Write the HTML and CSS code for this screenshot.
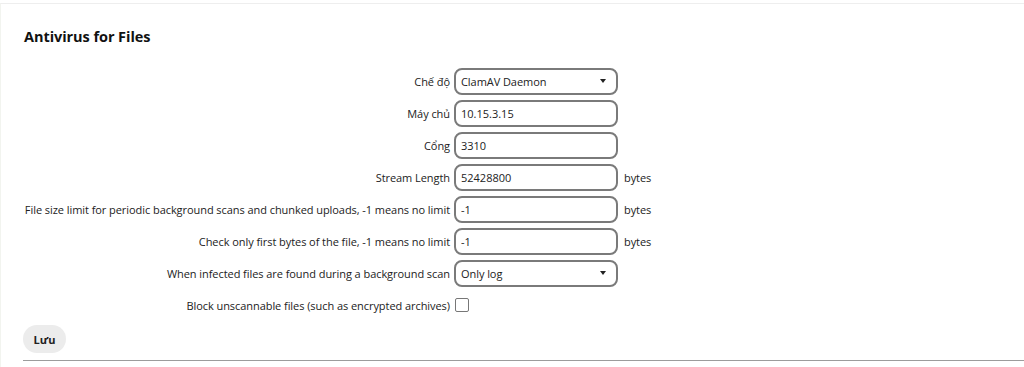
FILE: index.html
```html
<!DOCTYPE html>
<html lang="vi">
<head>
    <meta charset="UTF-8">
    <title>Antivirus for Files</title>
    <link rel="stylesheet" href="styles.css">
</head>
<body>
    <div class="page">
        <div class="section">
            <h2>Antivirus for Files</h2>

            <div class="form">
                <label>Chế độ</label>
                <div class="select">ClamAV Daemon <span class="caret"></span></div>
                <span></span>

                <label>Máy chủ</label>
                <input type="text" value="10.15.3.15">
                <span></span>

                <label>Cổng</label>
                <input type="text" value="3310">
                <span></span>

                <label>Stream Length</label>
                <input type="text" value="52428800">
                <span class="unit">bytes</span>

                <label>File size limit for periodic background scans and chunked uploads, -1 means no limit</label>
                <input type="text" value="-1">
                <span class="unit">bytes</span>

                <label>Check only first bytes of the file, -1 means no limit</label>
                <input type="text" value="-1">
                <span class="unit">bytes</span>

                <label>When infected files are found during a background scan</label>
                <div class="select">Only log <span class="caret"></span></div>
                <span></span>

                <label>Block unscannable files (such as encrypted archives)</label>
                <div class="check-cell"><span class="checkbox"></span></div>
                <span></span>
            </div>

            <button class="btn-save">Lưu</button>
        </div>
    </div>
</body>
</html>
```

FILE: styles.css
```css
* {
    margin: 0;
    padding: 0;
    box-sizing: border-box;
}

body {
    font-family: "Open Sans", "Noto Sans", sans-serif;
    font-size: 11px;
    letter-spacing: -0.06px;
    color: #222;
    background: #fff;
}

.page {
    margin-top: 3px;
    border-top: 1px solid #eeeeee;
    border-left: 1px solid #f2f4ef;
    height: 364px;
}

.section {
    margin-left: 22px;
    padding-top: 23px;
    border-bottom: 1px solid #9c9c9c;
}

h2 {
    font-size: 14.5px;
    line-height: 20px;
    font-weight: 700;
    color: #111;
    margin-left: 1px;
    margin-bottom: 18px;
}

.form {
    display: grid;
    grid-template-columns: 427px 164px auto;
    grid-auto-rows: 32px;
    column-gap: 4px;
    align-items: center;
}

.form label {
    text-align: right;
    white-space: nowrap;
}

.form input,
.select {
    height: 27px;
    border: 2px solid #7a7a7a;
    border-radius: 8px;
    padding: 0 5px;
    font-family: inherit;
    font-size: 11px;
    color: #222;
    background: #fff;
    outline: none;
    width: 164px;
}

.select {
    display: flex;
    align-items: center;
    justify-content: space-between;
    padding-right: 10px;
}

.caret {
    width: 0;
    height: 0;
    border-left: 3px solid transparent;
    border-right: 3px solid transparent;
    border-top: 4px solid #222;
}

.unit {
    padding-left: 2px;
}

.check-cell {
    display: flex;
    align-items: center;
}

.checkbox {
    width: 14px;
    height: 14px;
    border: 1px solid #777;
    border-radius: 2px;
    margin-left: 1px;
}

.btn-save {
    margin-top: 4px;
    margin-bottom: 7px;
    height: 28px;
    width: 43px;
    border: none;
    border-radius: 14px;
    background: #ececec;
    font-family: inherit;
    font-size: 11px;
    font-weight: 700;
    color: #222;
}
```
